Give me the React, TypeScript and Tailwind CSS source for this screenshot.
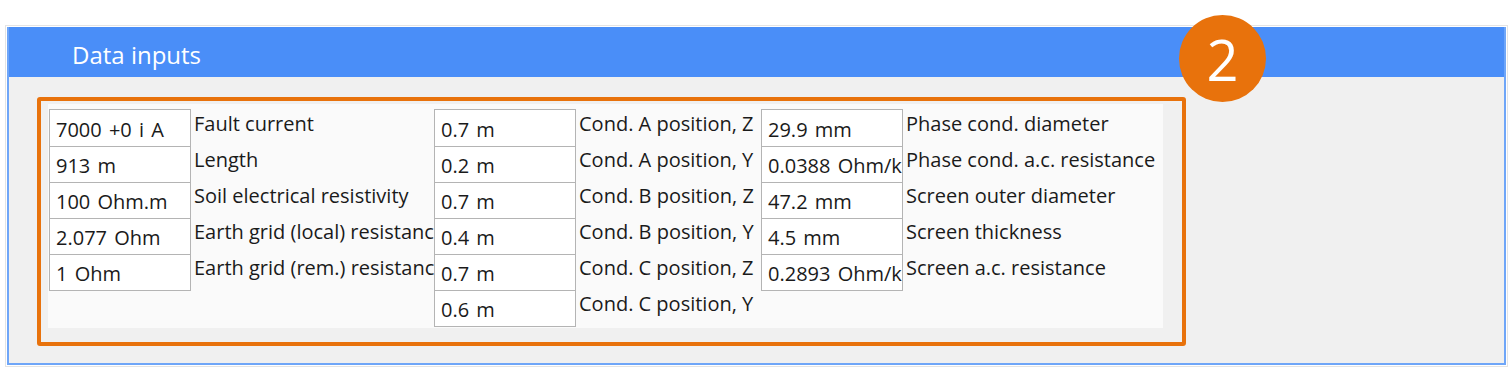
import React from "react";

type Field = { value: string; label: string };

const columns: { width: string; fields: Field[] }[] = [
  {
    width: "w-[385px]",
    fields: [
      { value: "7000 +0 i A", label: "Fault current" },
      { value: "913 m", label: "Length" },
      { value: "100 Ohm.m", label: "Soil electrical resistivity" },
      { value: "2.077 Ohm", label: "Earth grid (local) resistance" },
      { value: "1 Ohm", label: "Earth grid (rem.) resistance" },
    ],
  },
  {
    width: "w-[327px]",
    fields: [
      { value: "0.7 m", label: "Cond. A position, Z" },
      { value: "0.2 m", label: "Cond. A position, Y" },
      { value: "0.7 m", label: "Cond. B position, Z" },
      { value: "0.4 m", label: "Cond. B position, Y" },
      { value: "0.7 m", label: "Cond. C position, Z" },
      { value: "0.6 m", label: "Cond. C position, Y" },
    ],
  },
  {
    width: "flex-1",
    fields: [
      { value: "29.9 mm", label: "Phase cond. diameter" },
      { value: "0.0388 Ohm/km", label: "Phase cond. a.c. resistance" },
      { value: "47.2 mm", label: "Screen outer diameter" },
      { value: "4.5 mm", label: "Screen thickness" },
      { value: "0.2893 Ohm/km", label: "Screen a.c. resistance" },
    ],
  },
];

function FieldColumn({ width, fields }: { width: string; fields: Field[] }) {
  return (
    <div className={`flex ${width} min-w-0`}>
      <div className="w-[142px] shrink-0 self-start border border-[#b4b4b4] bg-white">
        {fields.map((f, i) => (
          <div
            key={f.label}
            className={`flex h-[36px] items-center overflow-hidden whitespace-nowrap pl-[6px] pt-[3px] [word-spacing:2px] ${
              i > 0 ? "border-t border-[#b4b4b4]" : ""
            }`}
          >
            {f.value}
          </div>
        ))}
      </div>
      <div className="min-w-0 flex-1">
        {fields.map((f) => (
          <div
            key={f.label}
            className="h-[36px] overflow-hidden whitespace-nowrap pl-[3px] pt-[5px]"
          >
            {f.label}
          </div>
        ))}
      </div>
    </div>
  );
}

export default function App() {
  return (
    <div
      className="relative h-[369px] w-[1512px] overflow-hidden bg-white pl-[5px] pt-[25px]"
      style={{ fontFamily: '"Open Sans", "Noto Sans", sans-serif' }}
    >
      <div className="w-[1503px] border border-[#e4e4e4] bg-white p-px">
        <div className="flex h-[338px] flex-col border-2 border-t-0 border-[#6fa6f8] bg-[#f0f0f0]">
          <div className="flex h-[50px] shrink-0 items-center bg-[#4a8ef8] pl-[63px] pt-[6px] text-[24px] leading-none text-white">
            Data inputs
          </div>
          <div className="pl-[28px] pt-[20px]">
            <div className="h-[249px] w-[1149px] rounded-[3px] border-4 border-[#e8720c] pl-[7px] pt-[3px]">
              <div className="flex h-[224px] w-[1115px] bg-[#fafafa] pl-px pt-[5px] text-[20px] leading-none text-[#1a1a1a]">
                {columns.map((c, i) => (
                  <FieldColumn key={i} width={c.width} fields={c.fields} />
                ))}
              </div>
            </div>
          </div>
        </div>
      </div>
      <div className="absolute left-[1179px] top-[15px] flex h-[87px] w-[87px] items-center justify-center rounded-full bg-[#e8720c] text-[56px] leading-none text-white">
        2
      </div>
    </div>
  );
}
